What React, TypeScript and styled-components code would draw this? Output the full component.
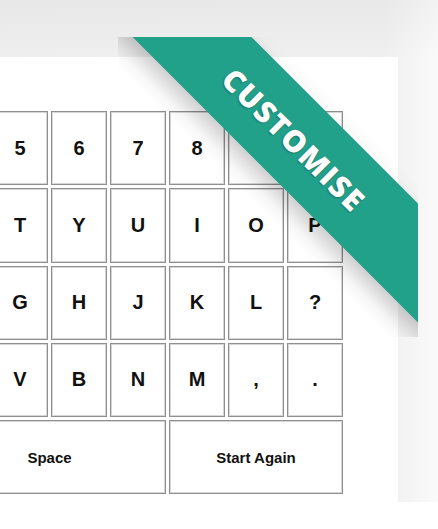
import styled, { createGlobalStyle } from "styled-components";

const GlobalStyle = createGlobalStyle`
  html, body {
    margin: 0;
    padding: 0;
    background: #ffffff;
    overflow: hidden;
  }
  body {
    font-family: "Liberation Sans", Arial, sans-serif;
  }
`;

const Page = styled.div`
  height: 502px;
  padding-top: 57px;
  box-sizing: border-box;
  background:
    linear-gradient(to bottom, rgba(0, 0, 0, 0.03), rgba(0, 0, 0, 0) 60px),
    linear-gradient(to right, #efefef 0%, #f0f0f0 88%, #fafafa 100%);
`;

const Card = styled.div`
  position: relative;
  box-sizing: border-box;
  width: 697px;
  height: 445px;
  margin-left: -299px;
  padding: 54px 55px 0 55px;
  background: #ffffff;
`;

const Keyboard = styled.div`
  display: grid;
  grid-template-columns: repeat(10, 56px);
  grid-auto-rows: 74.25px;
  gap: 3px;
`;

const Key = styled.button<{ $span?: number; $small?: boolean }>`
  grid-column: span ${(p) => p.$span ?? 1};
  box-sizing: border-box;
  margin: 0;
  padding: 0;
  background: #ffffff;
  border: 1px solid #8f8f8f;
  box-shadow: inset 0 0 0 1px #d6d6d6;
  font-family: "Liberation Sans", Arial, sans-serif;
  font-weight: 700;
  font-size: ${(p) => (p.$small ? "15px" : "20px")};
  color: #111111;
  display: flex;
  align-items: center;
  justify-content: center;
  cursor: pointer;
`;

const RibbonClip = styled.div`
  position: absolute;
  top: -20px;
  right: -20px;
  width: 300px;
  height: 300px;
  overflow: hidden;
  pointer-events: none;
`;

const Ribbon = styled.div`
  position: absolute;
  left: -38px;
  top: 71px;
  width: 450px;
  height: 84px;
  box-sizing: border-box;
  padding-right: 30px;
  transform: rotate(45deg);
  background: #22a18a;
  box-shadow: 0 10px 22px rgba(0, 0, 0, 0.22);
  display: flex;
  align-items: center;
  justify-content: center;
  color: #ffffff;
  font-family: "Open Sans", sans-serif;
  font-weight: 800;
  font-size: 30px;
  letter-spacing: 1.5px;
  text-shadow: 0 1px 2px rgba(0, 0, 0, 0.35);
  pointer-events: auto;
`;

const rows: string[][] = [
  ["1", "2", "3", "4", "5", "6", "7", "8", "9", "0"],
  ["Q", "W", "E", "R", "T", "Y", "U", "I", "O", "P"],
  ["A", "S", "D", "F", "G", "H", "J", "K", "L", "?"],
  ["-", "Z", "X", "C", "V", "B", "N", "M", ",", "."],
];

export default function App() {
  return (
    <>
      <GlobalStyle />
      <Page>
        <Card>
          <Keyboard>
            {rows.flat().map((k, i) => (
              <Key key={i}>{k}</Key>
            ))}
            <Key $span={3} $small>
              Delete
            </Key>
            <Key $span={4} $small>
              Space
            </Key>
            <Key $span={3} $small>
              Start Again
            </Key>
          </Keyboard>
          <RibbonClip>
            <Ribbon>CUSTOMISE</Ribbon>
          </RibbonClip>
        </Card>
      </Page>
    </>
  );
}
